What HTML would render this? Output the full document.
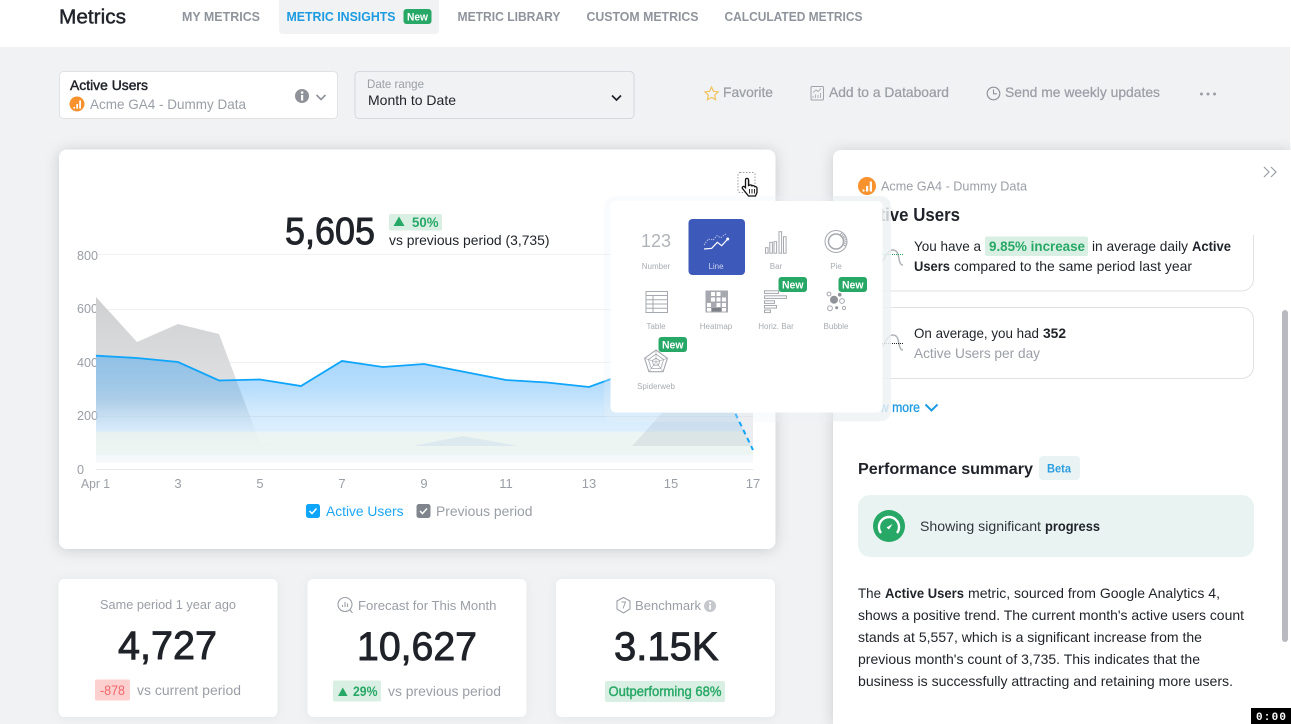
<!DOCTYPE html>
<html><head><meta charset="utf-8"><style>
html,body{margin:0;padding:0;background:#f0f2f4;width:1291px;height:724px;overflow:hidden}
svg{display:block;position:absolute;left:0;top:0}
text{font-family:"Liberation Sans",sans-serif;white-space:pre}
.g{fill:#9a9ea6}.d{fill:#1f2329}.b{font-weight:700}
.m{stroke-width:.45;stroke:currentColor}
.big{stroke-width:.9;stroke:currentColor}
.nav{font-size:12.5px;font-weight:700;fill:#8f949c}
.l{font-size:8px;fill:#a8abb2}
.ax{font-size:13px;fill:#9a9ea6}
.ic{fill:none;stroke:#a6a9af}
</style></head><body>
<svg width="1291" height="724" viewBox="0 0 1291 724" xmlns="http://www.w3.org/2000/svg">
<defs>
<filter id="s" x="-10%" y="-10%" width="120%" height="120%"><feDropShadow dx="0" dy="1" stdDeviation="7" flood-color="#000" flood-opacity=".17"/></filter>
<filter id="s2" x="-10%" y="-10%" width="120%" height="120%"><feDropShadow dx="0" dy="1" stdDeviation="5" flood-color="#000" flood-opacity=".05"/></filter>
<linearGradient id="gg" gradientUnits="userSpaceOnUse" x1="0" y1="297" x2="0" y2="463">
<stop offset="0" stop-color="#cfd0d1"/><stop offset=".45" stop-color="#dcddde"/><stop offset=".62" stop-color="#dfe1e3"/><stop offset=".72" stop-color="#e0e3e6" stop-opacity=".55"/><stop offset=".8" stop-color="#e4e7ea" stop-opacity=".2"/><stop offset=".88" stop-color="#e4e7ea" stop-opacity=".06"/><stop offset="1" stop-color="#eef1f2" stop-opacity="0"/></linearGradient>
<linearGradient id="bg" gradientUnits="userSpaceOnUse" x1="0" y1="355" x2="0" y2="463">
<stop offset="0" stop-color="#2b9cf5" stop-opacity=".42"/><stop offset=".3" stop-color="#2b9cf5" stop-opacity=".34"/><stop offset=".55" stop-color="#2b9cf5" stop-opacity=".2"/><stop offset=".7" stop-color="#2b9cf5" stop-opacity=".17"/><stop offset=".72" stop-color="#7fb8a8" stop-opacity=".14"/><stop offset=".92" stop-color="#7fb8a8" stop-opacity=".14"/><stop offset=".93" stop-color="#c9dfee" stop-opacity=".22"/><stop offset="1" stop-color="#dfeaf2" stop-opacity=".28"/></linearGradient>
<clipPath id="ca"><rect x="96" y="250" width="657" height="212.7"/></clipPath>
</defs>

<!-- header -->
<rect x="0" y="0" width="1291" height="47" fill="#fff"/>
<rect x="1290" y="47" width="1" height="677" fill="#fff"/>
<text x="59" y="23.5" font-size="20" textLength="67" lengthAdjust="spacingAndGlyphs" class="d m" color="#1f2329">Metrics</text>
<text x="182" y="21" class="nav" textLength="78" lengthAdjust="spacingAndGlyphs">MY METRICS</text>
<rect x="279" y="-4" width="160" height="38" rx="4" fill="#f0f2f4"/>
<text x="286.5" y="21" class="nav" style="fill:#1d9be0" textLength="109" lengthAdjust="spacingAndGlyphs">METRIC INSIGHTS</text>
<rect x="403.5" y="9" width="28" height="15" rx="3" fill="#27a866"/>
<text x="407" y="20.5" font-size="11" font-weight="700" fill="#fff" textLength="21" lengthAdjust="spacingAndGlyphs">New</text>
<text x="457.5" y="21" class="nav" textLength="103" lengthAdjust="spacingAndGlyphs">METRIC LIBRARY</text>
<text x="586.5" y="21" class="nav" textLength="112" lengthAdjust="spacingAndGlyphs">CUSTOM METRICS</text>
<text x="724.5" y="21" class="nav" textLength="138" lengthAdjust="spacingAndGlyphs">CALCULATED METRICS</text>

<!-- selectors -->
<rect x="59.5" y="71.5" width="278" height="47" rx="4" fill="#fff" stroke="#e0e2e5"/>
<text x="70" y="90" font-size="14" class="d m" color="#1f2329" textLength="78" lengthAdjust="spacingAndGlyphs">Active Users</text>
<circle cx="77" cy="104" r="7.5" fill="#f7922e"/>
<path d="M73.5 107h1.6v1.6h-1.6zM76.3 104h1.7v4.6h-1.7zM79.2 100.5h1.8v8.100h-1.800z" fill="#fff"/>
<text x="90" y="109" font-size="14" class="g" textLength="156" lengthAdjust="spacingAndGlyphs">Acme GA4 - Dummy Data</text>
<circle cx="302" cy="96" r="7" fill="#8f9399"/>
<rect x="301" y="95" width="2.200" height="5.500" fill="#fff"/><circle cx="302.100" cy="92.500" r="1.300" fill="#fff"/>
<path d="M316.500 95l4.500 4.500 4.500-4.500" fill="none" stroke="#8f9399" stroke-width="1.600"/>
<rect x="355" y="71.500" width="279" height="47" rx="4" fill="#f0f2f4" stroke="#d5d8dc"/>
<text x="367" y="88" font-size="12" class="g" textLength="57" lengthAdjust="spacingAndGlyphs">Date range</text>
<text x="368" y="105" font-size="14" class="d" textLength="88" lengthAdjust="spacingAndGlyphs">Month to Date</text>
<path d="M612 95.500l4.500 4.500 4.500-4.500" fill="none" stroke="#1f2329" stroke-width="1.700"/>

<!-- actions -->
<path d="M711.500 87l2 4.300 4.600.6-3.400 3.200.9 4.600-4.100-2.300-4.100 2.300.9-4.600-3.400-3.200 4.600-.6z" fill="none" stroke="#f3c15f" stroke-width="1.200"/>
<text x="723" y="97" font-size="14" class="g" style="font-weight:400" stroke="#9a9ea6" stroke-width=".25" textLength="50" lengthAdjust="spacingAndGlyphs">Favorite</text>
<rect x="811" y="86.500" width="12.500" height="13.500" rx="1" fill="none" stroke="#a0a4aa"/>
<path d="M813 98v-2M815.500 98v-3.500M818 98v-3M820.500 98v-5M813 92.500l3-2.500 2 1.500 3-3" fill="none" stroke="#a0a4aa" stroke-width=".8"/>
<text x="829" y="97" font-size="14" class="g" stroke="#9a9ea6" stroke-width=".25" textLength="120" lengthAdjust="spacingAndGlyphs">Add to a Databoard</text>
<circle cx="993.500" cy="93.500" r="6.300" fill="none" stroke="#8f9399" stroke-width="1.200"/>
<path d="M993.500 89.500v4.300h3.500" fill="none" stroke="#8f9399" stroke-width="1.100"/>
<text x="1005" y="97" font-size="14" class="g" stroke="#9a9ea6" stroke-width=".25" textLength="155" lengthAdjust="spacingAndGlyphs">Send me weekly updates</text>
<circle cx="1201.500" cy="94" r="1.500" fill="#9a9ea6"/><circle cx="1208" cy="94" r="1.500" fill="#9a9ea6"/><circle cx="1214.500" cy="94" r="1.500" fill="#9a9ea6"/>

<!-- main card -->
<rect x="59" y="149.500" width="716.500" height="399.500" rx="8" fill="#fff" filter="url(#s)"/>
<rect x="738" y="172.500" width="17" height="20" rx="2" fill="none" stroke="#9a9ea6" stroke-dasharray="1.500 1.500"/>
<path d="M743 190v-3M746 190v-7M749 190v-10M752 190v-6" stroke="#9a9ea6" fill="none"/>
<text x="285" y="244" font-size="38" class="d big" color="#1f2329" textLength="90" lengthAdjust="spacingAndGlyphs">5,605</text>
<rect x="389" y="214" width="53" height="16.500" rx="2" fill="#d9efe3"/>
<path d="M393.500 226l5.500-9.500 5.500 9.500z" fill="#27a866"/>
<text x="412" y="227" font-size="14" font-weight="700" fill="#27a866" textLength="26.500" lengthAdjust="spacingAndGlyphs">50%</text>
<text x="389" y="245" font-size="14" class="d" textLength="160.500" lengthAdjust="spacingAndGlyphs">vs previous period (3,735)</text>

<!-- chart -->
<g stroke="#eff0f2" stroke-width="1">
<path d="M96 254.500H753M96 309.500H753M96 362.500H753M96 416.500H753"/><path d="M96 469.500H753" stroke="#e8e9eb"/></g>
<g class="ax">
<text x="77" y="260" class="ax" textLength="21" lengthAdjust="spacingAndGlyphs">800</text>
<text x="77" y="313" class="ax" textLength="21" lengthAdjust="spacingAndGlyphs">600</text>
<text x="77" y="367" class="ax" textLength="21" lengthAdjust="spacingAndGlyphs">400</text>
<text x="77" y="420" class="ax" textLength="21" lengthAdjust="spacingAndGlyphs">200</text>
<text x="77" y="474" class="ax" textLength="7" lengthAdjust="spacingAndGlyphs">0</text>
<text x="81" y="488" class="ax" textLength="29" lengthAdjust="spacingAndGlyphs">Apr 1</text>
<text x="178" y="488" class="ax" text-anchor="middle">3</text>
<text x="260" y="488" class="ax" text-anchor="middle">5</text>
<text x="342" y="488" class="ax" text-anchor="middle">7</text>
<text x="424" y="488" class="ax" text-anchor="middle">9</text>
<text x="506" y="488" class="ax" text-anchor="middle">11</text>
<text x="589" y="488" class="ax" text-anchor="middle">13</text>
<text x="671" y="488" class="ax" text-anchor="middle">15</text>
<text x="753" y="488" class="ax" text-anchor="middle">17</text>
</g>
<g clip-path="url(#ca)">
<path d="M96 297L137 342 178 324 219 334 260 443 301 445 335 446H96z" fill="url(#gg)"/>
<path d="M96 355.700L137 358 178 362 219 380.500 260 379.500 301 386 342 361 383 367 424 364 465 372 506 380 547 382.500 589 387 630 372 671 368 712 365 753 450V463H96z" fill="url(#bg)"/>
<path d="M413 446L463 436 518 446z" fill="#bcd6e8" fill-opacity=".35"/>
<path d="M632 446L662 413H753V446z" fill="#9aa6b5" fill-opacity=".2"/>
</g>
<path d="M96 355.700L137 358 178 362 219 380.500 260 379.500 301 386 342 361 383 367 424 364 465 372 506 380 547 382.500 589 387 630 372 671 368 712 365" fill="none" stroke="#0ea5fb" stroke-width="1.800"/>
<path d="M712 365L753 450" fill="none" stroke="#0ea5fb" stroke-width="2" stroke-dasharray="5 4"/>

<!-- legend -->
<rect x="306" y="504" width="14" height="14" rx="2.500" fill="#0ea5fb"/>
<path d="M309.500 511l2.500 2.500 4.500-5" fill="none" stroke="#fff" stroke-width="1.500"/>
<text x="326" y="516" font-size="14" fill="#1ba6f5" textLength="77.500" lengthAdjust="spacingAndGlyphs">Active Users</text>
<rect x="416.500" y="504" width="14" height="14" rx="2.500" fill="#80848c"/>
<path d="M420 511l2.500 2.500 4.500-5" fill="none" stroke="#fff" stroke-width="1.500"/>
<text x="436" y="516" font-size="14" class="g" textLength="96.500" lengthAdjust="spacingAndGlyphs">Previous period</text>

<!-- bottom cards -->
<g filter="url(#s2)">
<rect x="58.500" y="579" width="219" height="138" rx="6" fill="#fff"/>
<rect x="307.500" y="579" width="219" height="138" rx="6" fill="#fff"/>
<rect x="556" y="579" width="219" height="138" rx="6" fill="#fff"/>
</g>
<text x="100" y="609" font-size="13" class="g" textLength="136" lengthAdjust="spacingAndGlyphs">Same period 1 year ago</text>
<text x="118" y="659" font-size="40" class="d big" color="#1f2329" textLength="99" lengthAdjust="spacingAndGlyphs">4,727</text>
<rect x="95" y="679.500" width="35" height="21" rx="2" fill="#fdd0d0"/>
<text x="100" y="695" font-size="13.500" fill="#f2666a" textLength="25" lengthAdjust="spacingAndGlyphs">-878</text>
<text x="137" y="695" font-size="14" class="g" textLength="104" lengthAdjust="spacingAndGlyphs">vs current period</text>

<circle cx="345" cy="604.500" r="7" fill="none" stroke="#9a9ea6" stroke-width="1.100"/>
<path d="M342.500 607v-2M345 607v-5M347.500 607v-3.500M350 610l2.500 3" fill="none" stroke="#9a9ea6" stroke-width="1.100"/>
<text x="358" y="610" font-size="13" class="g" textLength="138.500" lengthAdjust="spacingAndGlyphs">Forecast for This Month</text>
<text x="357" y="660" font-size="40" class="d big" color="#1f2329" textLength="120" lengthAdjust="spacingAndGlyphs">10,627</text>
<rect x="333" y="680.500" width="48" height="21" rx="2" fill="#d9efe3"/>
<path d="M338 696l4.800-8.500 4.800 8.500z" fill="#27a866"/>
<text x="353" y="696" font-size="13.500" font-weight="700" fill="#27a866" textLength="24.500" lengthAdjust="spacingAndGlyphs">29%</text>
<text x="388" y="696" font-size="14" class="g" textLength="113" lengthAdjust="spacingAndGlyphs">vs previous period</text>

<path d="M623.500 597.500l6.500 3.500v8l-6.500 4-6.500-4v-8z" fill="none" stroke="#9a9ea6" stroke-width="1.100"/>
<path d="M621.500 602h4l-2.500 6.500" fill="none" stroke="#9a9ea6"/>
<text x="635" y="610" font-size="13" class="g" textLength="66" lengthAdjust="spacingAndGlyphs">Benchmark</text>
<circle cx="710" cy="606" r="6" fill="#c4c7cb"/><rect x="709.200" y="605" width="1.800" height="4.500" fill="#fff"/><circle cx="710.100" cy="603" r="1.100" fill="#fff"/>
<text x="614" y="660" font-size="40" class="d big" color="#1f2329" textLength="104.500" lengthAdjust="spacingAndGlyphs">3.15K</text>
<rect x="605" y="681" width="120" height="21" rx="2" fill="#d9efe3"/>
<text x="608.500" y="696" font-size="13.500" fill="#27a866" stroke="#27a866" stroke-width=".4" textLength="113" lengthAdjust="spacingAndGlyphs">Outperforming 68%</text>

<!-- right panel -->
<path d="M841 150H1291V724H833V158a8 8 0 0 1 8-8z" fill="#fff" filter="url(#s)"/>
<path d="M1264 167l5 5-5 5M1271 167l5 5-5 5" fill="none" stroke="#9a9ea6" stroke-width="1.200"/>
<circle cx="867" cy="186" r="9" fill="#f7922e"/>
<path d="M862.500 189.500h2v2h-2zM866 186h2.200v5.500H866zM869.700 181.500h2.300v10h-2.300z" fill="#fff"/>
<text x="881" y="190.500" font-size="13" class="g" textLength="146" lengthAdjust="spacingAndGlyphs">Acme GA4 - Dummy Data</text>
<text x="858" y="221" font-size="18" font-weight="700" class="d" textLength="102" lengthAdjust="spacingAndGlyphs">Active Users</text>

<!-- insight cards -->
<path d="M858.500 235v44a12 12 0 0 0 12 12h371a12 12 0 0 0 12-12v-44" fill="none" stroke="#dfe1e4"/>
<path d="M876 265C885 265 885 250 893 250S897 265 903 265" fill="none" stroke="#b0b3b8" stroke-width="1.500"/>
<path d="M874 254.500h29" stroke="#27a866" stroke-dasharray="1 1" fill="none"/>
<text x="914" y="251" font-size="14" class="d" textLength="67" lengthAdjust="spacingAndGlyphs">You have a</text>
<rect x="985" y="236.500" width="103" height="19.500" rx="2" fill="#d9efe3"/>
<text x="989" y="251" font-size="14" font-weight="700" fill="#27a866" textLength="96" lengthAdjust="spacingAndGlyphs">9.85% increase</text>
<text x="1092" y="251" font-size="14" class="d" textLength="96" lengthAdjust="spacingAndGlyphs">in average daily</text>
<text x="1192" y="251" font-size="14" class="d b" textLength="39" lengthAdjust="spacingAndGlyphs">Active</text>
<text x="914" y="271" font-size="14" class="d b" textLength="36" lengthAdjust="spacingAndGlyphs">Users</text>
<text x="954" y="271" font-size="14" class="d" textLength="238" lengthAdjust="spacingAndGlyphs">compared to the same period last year</text>
<rect x="858.500" y="307.500" width="395" height="71" rx="12" fill="#fff" stroke="#dfe1e4"/>
<path d="M876 350C885 350 885 335 893 335S897 350 903 350" fill="none" stroke="#b0b3b8" stroke-width="1.500"/>
<path d="M874 343.500h29" stroke="#1f2329" stroke-dasharray="1 1" fill="none"/>
<text x="914" y="338" font-size="14" class="d" textLength="125" lengthAdjust="spacingAndGlyphs">On average, you had</text>
<text x="1043" y="338" font-size="14" class="d b" textLength="23" lengthAdjust="spacingAndGlyphs">352</text>
<text x="914" y="358" font-size="14" class="g" textLength="126" lengthAdjust="spacingAndGlyphs">Active Users per day</text>
<text x="858" y="412" font-size="13.500" fill="#1d9be0" stroke="#1d9be0" stroke-width=".3" textLength="62" lengthAdjust="spacingAndGlyphs">Show more</text>
<path d="M925.500 404.500l6 6 6-6" fill="none" stroke="#1d9be0" stroke-width="2"/>
<rect x="1282" y="310" width="6" height="332" rx="3" fill="#b8babf"/>

<!-- performance -->
<text x="858" y="474" font-size="16" font-weight="700" class="d" textLength="175" lengthAdjust="spacingAndGlyphs">Performance summary</text>
<rect x="1039" y="456" width="41" height="24" rx="4" fill="#e9f3f3"/>
<text x="1047" y="472.500" font-size="12" font-weight="700" fill="#2a9ee0" textLength="24" lengthAdjust="spacingAndGlyphs">Beta</text>
<rect x="858" y="495" width="396" height="62" rx="12" fill="#e9f3f2"/>
<circle cx="889" cy="526" r="16" fill="#27a866"/>
<path d="M881 533a10 10 0 1 1 16 0" fill="none" stroke="#fff" stroke-width="2.400"/>
<path d="M886.500 527.500l6-3.500-3.500 5.500z" fill="#fff"/>
<text x="920" y="531" font-size="14" class="d" fill-opacity=".92" textLength="121" lengthAdjust="spacingAndGlyphs">Showing significant</text>
<text x="1045" y="531" font-size="14" class="d b" textLength="55" lengthAdjust="spacingAndGlyphs">progress</text>
<text x="858" y="598" font-size="14" class="d" textLength="23" lengthAdjust="spacingAndGlyphs">The</text>
<text x="885" y="598" font-size="14" class="d b" textLength="79" lengthAdjust="spacingAndGlyphs">Active Users</text>
<text x="968" y="598" font-size="14" class="d" textLength="252" lengthAdjust="spacingAndGlyphs">metric, sourced from Google Analytics 4,</text>
<text x="858" y="620" font-size="14" class="d" textLength="386" lengthAdjust="spacingAndGlyphs">shows a positive trend. The current month's active users count</text>
<text x="858" y="642" font-size="14" class="d" textLength="344" lengthAdjust="spacingAndGlyphs">stands at 5,557, which is a significant increase from the</text>
<text x="858" y="664" font-size="14" class="d" textLength="342" lengthAdjust="spacingAndGlyphs">previous month's count of 3,735. This indicates that the</text>
<text x="858" y="686" font-size="14" class="d" textLength="375" lengthAdjust="spacingAndGlyphs">business is successfully attracting and retaining more users.</text>

<!-- popup -->
<rect x="604" y="196" width="287" height="226" rx="12" fill="#eef1f3" fill-opacity=".28"/>
<path d="M833 196H881a10 10 0 0 1 10 10V411a10 10 0 0 1-10 10H833z" fill="#eef1f3" fill-opacity=".75"/>
<rect x="610.500" y="201" width="272" height="211.500" rx="5" fill="#fff"/>
<rect x="688.500" y="219" width="56.500" height="56" rx="4" fill="#3d59ba"/>
<g text-anchor="middle">
<text x="656" y="247" font-size="18" fill="#b0b3b9" text-anchor="middle">123</text>
<text x="656" y="269" class="l" text-anchor="middle">Number</text>
<text x="716" y="269" class="l" style="fill:#cdd5ee" text-anchor="middle">Line</text>
<text x="776" y="269" class="l" text-anchor="middle">Bar</text>
<text x="836" y="269" class="l" text-anchor="middle">Pie</text>
<text x="656" y="329" class="l" text-anchor="middle">Table</text>
<text x="716" y="329" class="l" text-anchor="middle">Heatmap</text>
<text x="776" y="329" class="l" text-anchor="middle">Horiz. Bar</text>
<text x="836" y="329" class="l" text-anchor="middle">Bubble</text>
<text x="656" y="389" class="l" text-anchor="middle">Spiderweb</text>
</g>
<path d="M704 249l7.700-.7 5.600-6 4.400 3.400 6-6.700" fill="none" stroke="#fff" stroke-width="1.200"/>
<circle cx="727.700" cy="239" r="1.500" fill="#fff"/>
<path d="M704 245l4.300-6 5 1 3.400-4.300 4 2 6-4.400" fill="none" stroke="#cdd5ee" stroke-width=".8" stroke-dasharray="1.500 1"/>
<g class="ic">
<rect x="765.500" y="247.700" width="2.600" height="5.500"/><rect x="769.800" y="242.300" width="2.600" height="10.900"/><rect x="774" y="241.700" width="2.600" height="11.500"/><rect x="779" y="231.700" width="2.600" height="21.500"/><rect x="783.500" y="236.700" width="2.600" height="16.500"/>
<circle cx="836" cy="241.500" r="11"/><circle cx="836" cy="241.500" r="7.500" stroke-width="1.500"/>
<path d="M841 233l4 4 1 5-2 4" stroke-width="3" stroke-dasharray="1 1"/>
<rect x="646" y="291.500" width="21.500" height="21"/><path d="M646 295.500h21.500M646 299.800h21.500M646 304h21.500M646 308.300h21.500M653 295.500v17"/>
</g>
<g>
<rect x="705.500" y="290.500" width="22.500" height="22" fill="#a6a9af"/>
<path d="M711 292h4v4h-4zM716.500 292h4v4h-4zM711 297.500h4v4h-4zM716.500 297.500h4v4h-4zM722 297.500h4v4h-4zM707 303h4v4h-4zM716.500 303h4v4h-4zM722 303h4v4h-4zM707 308h4v3.500h-4zM722 308h4v3.500h-4z" fill="#fff"/>
<path d="M712 308h9v3.500h-9z" fill="#7e8188"/>
</g>
<g class="ic">
<rect x="764.500" y="290.800" width="14" height="2.600"/><rect x="764.500" y="295.800" width="22" height="2.600"/><rect x="764.500" y="300.800" width="10" height="2.600"/><rect x="764.500" y="305.500" width="12" height="2.600"/><rect x="764.500" y="310" width="6" height="2.600"/>
</g>
<g>
<circle cx="829" cy="294" r="1.900" class="ic"/><circle cx="839.700" cy="294.700" r="1.800" fill="#8f9399"/><circle cx="834" cy="299.700" r="4" fill="#8f9399"/><circle cx="842" cy="301" r="2.400" class="ic"/><circle cx="830" cy="308.300" r="2.400" class="ic"/><circle cx="836.700" cy="307.700" r="1.500" fill="#8f9399"/><circle cx="844" cy="308" r="1.600" class="ic"/>
</g>
<g fill="none" stroke="#a6a9af">
<path d="M656 350L667.400 358.300 663.100 371.700H648.900L644.600 358.300z" stroke-width="1.100"/>
<path d="M656 354L663.600 359.500 660.700 368.500H651.300L648.400 359.500z" stroke-width=".8"/>
<path d="M656 358L659.800 360.800 658.400 365.200H653.600L652.200 360.800z" stroke-width=".8"/>
<path d="M656 350V362M667.400 358.300L656 362M663.100 371.700L656 362M648.900 371.700L656 362M644.600 358.300L656 362" stroke-width=".6"/>
</g>
<g font-size="11" font-weight="700" fill="#fff">
<rect x="778.500" y="277" width="28.500" height="15" rx="3" fill="#27a866"/><text x="782" y="288.500" textLength="21.500" lengthAdjust="spacingAndGlyphs">New</text>
<rect x="838.500" y="277" width="28.500" height="15" rx="3" fill="#27a866"/><text x="842" y="288.500" textLength="21.500" lengthAdjust="spacingAndGlyphs">New</text>
<rect x="658.500" y="337" width="28.500" height="15" rx="3" fill="#27a866"/><text x="662" y="348.500" textLength="21.500" lengthAdjust="spacingAndGlyphs">New</text>
</g>

<!-- hand cursor -->
<path d="M745.500 180c0-2.200 3-2.200 3 0v5.500c1.700-.9 3-.6 3.400.4 1.400-.6 2.600-.2 3 .8 1.300-.4 2.100.4 2.100 1.800v4l-1.500 3.500h-7l-6-7.500c-.9-1.400.9-2.800 2.200-1.600l.8.800z" fill="#fff" stroke="#111" stroke-width="1.300"/>
<path d="M749.500 189v4.500M752 189v4.500M754.500 189v4.500" stroke="#111" stroke-width=".9" fill="none"/>

<!-- timer -->
<rect x="1251" y="708" width="40" height="16" fill="#000"/>
<text x="1271" y="720" font-size="11" font-weight="700" fill="#fff" text-anchor="middle" style="font-family:'Liberation Mono',monospace" textLength="30" lengthAdjust="spacing">0:00</text>
</svg>
</body></html>
